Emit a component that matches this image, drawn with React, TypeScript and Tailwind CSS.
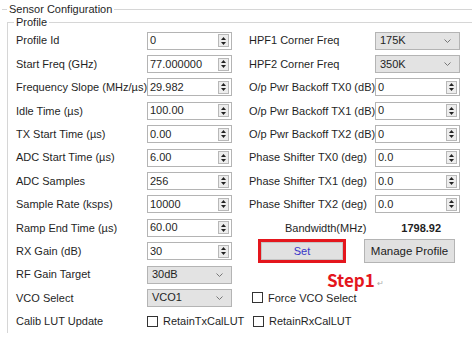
import React from 'react';

const leftRows: { label: string; value: string; kind: 'spin' | 'select' }[] = [
  { label: 'Profile Id', value: '0', kind: 'spin' },
  { label: 'Start Freq (GHz)', value: '77.000000', kind: 'spin' },
  { label: 'Frequency Slope (MHz/µs)', value: '29.982', kind: 'spin' },
  { label: 'Idle Time (µs)', value: '100.00', kind: 'spin' },
  { label: 'TX Start Time (µs)', value: '0.00', kind: 'spin' },
  { label: 'ADC Start Time (µs)', value: '6.00', kind: 'spin' },
  { label: 'ADC Samples', value: '256', kind: 'spin' },
  { label: 'Sample Rate (ksps)', value: '10000', kind: 'spin' },
  { label: 'Ramp End Time (µs)', value: '60.00', kind: 'spin' },
  { label: 'RX Gain (dB)', value: '30', kind: 'spin' },
  { label: 'RF Gain Target', value: '30dB', kind: 'select' },
  { label: 'VCO Select', value: 'VCO1', kind: 'select' },
];

const rightRows: { label: string; value: string; kind: 'spin' | 'select' }[] = [
  { label: 'HPF1 Corner Freq', value: '175K', kind: 'select' },
  { label: 'HPF2 Corner Freq', value: '350K', kind: 'select' },
  { label: 'O/p Pwr Backoff TX0 (dB)', value: '0', kind: 'spin' },
  { label: 'O/p Pwr Backoff TX1 (dB)', value: '0', kind: 'spin' },
  { label: 'O/p Pwr Backoff TX2 (dB)', value: '0', kind: 'spin' },
  { label: 'Phase Shifter TX0 (deg)', value: '0.0', kind: 'spin' },
  { label: 'Phase Shifter TX1 (deg)', value: '0.0', kind: 'spin' },
  { label: 'Phase Shifter TX2 (deg)', value: '0.0', kind: 'spin' },
];

function Spin({ value }: { value: string }) {
  return (
    <div className="flex items-center h-[18px] w-[85px] border border-[#b4b4b4] bg-white">
      <span className="flex-1 pl-[2px] leading-none">{value}</span>
      <div className="flex flex-col items-center justify-center gap-[2px] w-[11px] h-[13px] mr-[2px] border border-[#b8b8b8] bg-[#ededed]">
        <svg width="5" height="3" viewBox="0 0 5 3">
          <path d="M0 3 L2.5 0 L5 3 Z" fill="#222" />
        </svg>
        <svg width="5" height="3" viewBox="0 0 5 3">
          <path d="M0 0 L5 0 L2.5 3 Z" fill="#222" />
        </svg>
      </div>
    </div>
  );
}

function Select({ value }: { value: string }) {
  return (
    <div className="flex items-center h-[18px] w-[85px] border border-[#b4b4b4] bg-[#e3e3e3]">
      <span className="flex-1 pl-[4px] leading-none">{value}</span>
      <svg width="7" height="4" viewBox="0 0 7 4" className="mr-[8px]">
        <polyline points="0.5,0.5 3.5,3.5 6.5,0.5" fill="none" stroke="#777" strokeWidth="1" />
      </svg>
    </div>
  );
}

function Check({ label }: { label: string }) {
  return (
    <div className="flex items-center gap-[5px] whitespace-nowrap">
      <span className="shrink-0 w-[11px] h-[11px] border border-[#333] bg-white" />
      <span>{label}</span>
    </div>
  );
}

export default function App() {
  return (
    <div
      className="w-[474px] h-[340px] overflow-hidden bg-white text-[11px] text-[#1f1f1f]"
      style={{ fontFamily: '"Liberation Sans", Arial, sans-serif' }}
    >
      <fieldset className="mx-[2px] mt-[3px] border-t border-[#d6d6d6] min-w-0">
        <legend className="ml-[5px] px-[2px] leading-[13px]">Sensor Configuration</legend>
        <fieldset className="ml-[5px] border-t border-l border-[#d6d6d6] min-w-0">
          <legend className="ml-[6px] px-[2px] leading-[13px]">Profile</legend>
          <div className="grid grid-cols-[131px_85px_17px_126px_85px] auto-rows-[23.4px] items-center pl-[8px]">
            {leftRows.map((l, i) => {
              const r = rightRows[i];
              return (
                <React.Fragment key={l.label}>
                  <span className="whitespace-nowrap">{l.label}</span>
                  {l.kind === 'spin' ? <Spin value={l.value} /> : <Select value={l.value} />}
                  <span />
                  {i < 8 && r ? (
                    <>
                      <span className="whitespace-nowrap">{r.label}</span>
                      {r.kind === 'spin' ? <Spin value={r.value} /> : <Select value={r.value} />}
                    </>
                  ) : i === 8 ? (
                    <div className="col-span-2 flex items-center">
                      <span className="ml-[36px]">Bandwidth(MHz)</span>
                      <span className="ml-[35px] font-bold">1798.92</span>
                    </div>
                  ) : i === 9 ? (
                    <div className="col-span-2 flex items-center">
                      <div className="ml-[9px] w-[88px] h-[24px] border-[3px] border-[#e4161d] flex">
                        <div className="flex-1 bg-[#e1e1e1] border border-[#c4c4c4] flex items-center justify-center text-[#3535c8]">
                          Set
                        </div>
                      </div>
                      <div className="ml-[18px] w-[91px] h-[24px] bg-[#e1e1e1] border border-[#b4b4b4] flex items-center justify-center text-[#222] text-[11.5px]">
                        Manage Profile
                      </div>
                    </div>
                  ) : i === 10 ? (
                    <div className="col-span-2 flex items-end pt-[9px]">
                      <span
                        className="ml-[78px] text-[17px] font-bold text-[#e4161d] leading-none"
                        style={{ fontFamily: '"Noto Sans CJK SC", "Noto Sans", sans-serif' }}
                      >
                        Step1
                      </span>
                      <span className="ml-[2px] text-[8px] text-[#aaa] leading-none">↵</span>
                    </div>
                  ) : (
                    <div className="col-span-2 flex items-center pl-[3px]">
                      <Check label="Force VCO Select" />
                    </div>
                  )}
                </React.Fragment>
              );
            })}
            <span className="whitespace-nowrap">Calib LUT Update</span>
            <div>
              <Check label="RetainTxCalLUT" />
            </div>
            <span />
            <div className="col-span-2 flex items-center pl-[4px]">
              <Check label="RetainRxCalLUT" />
            </div>
          </div>
        </fieldset>
      </fieldset>
    </div>
  );
}
